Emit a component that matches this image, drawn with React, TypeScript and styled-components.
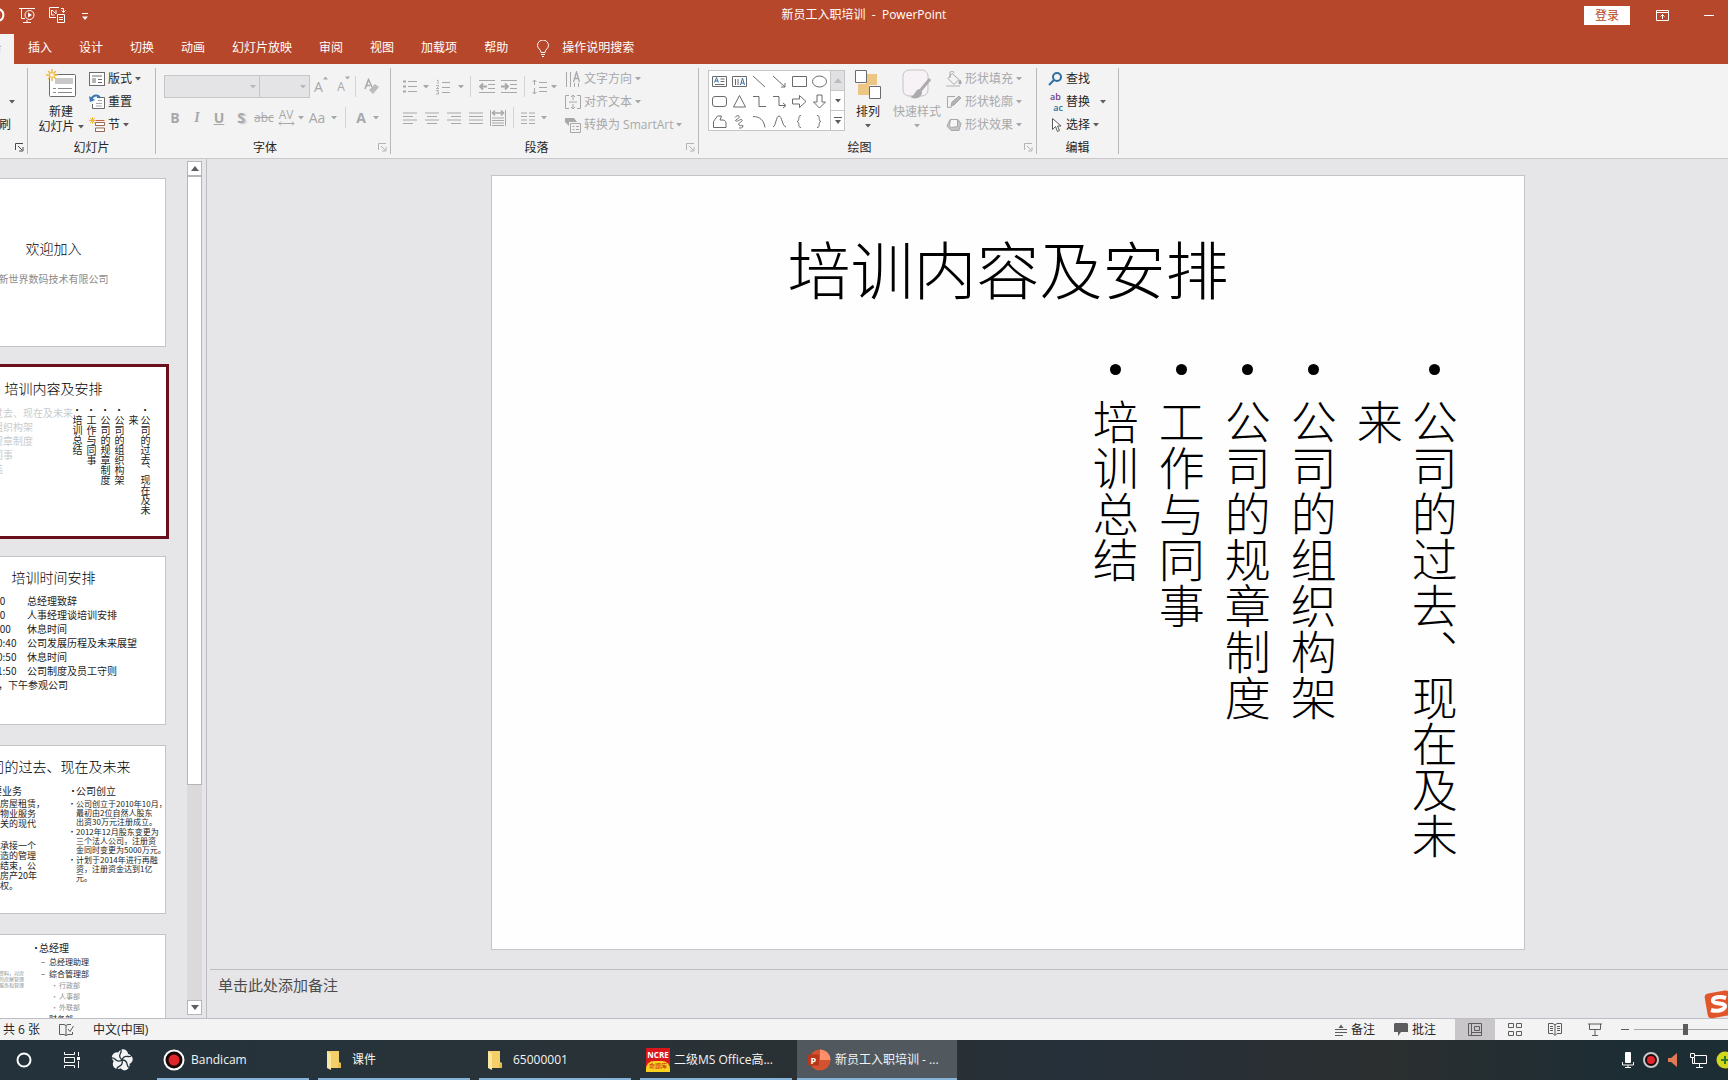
import React from 'react';
import styled, { createGlobalStyle, css } from 'styled-components';

const GlobalStyle = createGlobalStyle`
  *, *::before, *::after { box-sizing: border-box; }
  html, body, #root { height: 100%; margin: 0; }
  body {
    overflow: hidden;
    font-family: "Open Sans", "Noto Sans CJK SC", sans-serif;
    font-size: 12px;
    line-height: 16px;
    color: #262626;
  }
  button, input, select, textarea { font: inherit; color: inherit; margin: 0; }
  button { border: 0; padding: 0; background: none; white-space: nowrap; }
  ul { list-style: none; margin: 0; padding: 0; }
  h1, h2, p { margin: 0; font-weight: inherit; }
  svg { display: block; flex: none; }
`;

const GREY = '#a8a8aa';
const DARK = '#5c5c5e';

/* ---------- shell ---------- */

const Window = styled.div`
  display: flex;
  flex-direction: column;
  height: 100vh;
  overflow: hidden;
  background: #e6e6e8;
`;

const TitleBar = styled.header`
  display: grid;
  grid-template-columns: 1fr auto 1fr;
  align-items: center;
  height: 34px;
  padding-bottom: 4px;
  background: #b7472a;
  color: #fff;
`;

const QuickAccess = styled.div`
  display: flex;
  align-items: center;
  gap: 13px;
  margin-left: -10px;
`;

const DocTitle = styled.div`
  white-space: pre;
`;

const WindowTools = styled.div`
  display: flex;
  align-items: center;
  justify-content: flex-end;
  padding-right: 14px;
`;

const SignIn = styled.button`
  width: 46px;
  height: 19px;
  margin-right: 26px;
  background: #fff;
  color: #b7472a;
  line-height: 19px;
`;

const IconButton = styled.button<{ $right?: number }>`
  display: flex;
  align-items: center;
  justify-content: center;
  margin-right: ${p => p.$right ?? 0}px;
`;

const TabStrip = styled.nav`
  display: flex;
  height: 30px;
  background: #b7472a;
`;

const Tab = styled.button<{ $active?: boolean }>`
  display: flex;
  align-items: center;
  justify-content: flex-end;
  padding: 0 13px 2px 14px;
  color: #fff;
  ${p => p.$active && css`
    width: 14px;
    padding-left: 0;
    background: #f3f3f3;
    color: #b7472a;
    overflow: hidden;
  `}
`;

const Search = styled.button`
  display: flex;
  align-items: center;
  gap: 13px;
  padding: 0 14px 2px 16px;
  color: #fff;
`;

/* ---------- ribbon ---------- */

const Ribbon = styled.section`
  display: flex;
  height: 95px;
  border-bottom: 1px solid #c9c9cb;
  background: #f3f3f3;
`;

const Group = styled.div<{ $w: number }>`
  display: flex;
  flex-direction: column;
  flex: none;
  width: ${p => p.$w}px;
`;

const GroupLine = styled.div`
  flex: none;
  width: 1px;
  margin: 4px 0 4px;
  background: #b9b9bb;
`;

const GroupBody = styled.div<{ $left?: number; $gap?: number; $top?: number }>`
  display: flex;
  height: 72px;
  padding: ${p => p.$top ?? 3}px 0 0 ${p => p.$left ?? 0}px;
  gap: ${p => p.$gap ?? 0}px;
`;

const GroupFoot = styled.div`
  display: flex;
  align-items: center;
  height: 22px;
  padding-top: 1px;
  white-space: nowrap;
  & > span { flex: 1; text-align: center; }
`;

const Launcher = styled.button<{ $off?: boolean }>`
  display: flex;
  width: 16px;
  height: 16px;
  align-items: center;
  justify-content: center;
  color: ${p => (p.$off ? '#b4b4b6' : '#4a4a4c')};
`;

const Stack = styled.div<{ $w?: number }>`
  display: flex;
  flex-direction: column;
  flex: none;
  ${p => p.$w && `width: ${p.$w}px;`}
`;

const SmallCommand = styled.button<{ $off?: boolean; $far?: boolean }>`
  display: flex;
  align-items: center;
  height: 23px;
  gap: 3px;
  color: ${p => (p.$off ? GREY : '#262626')};
  & > svg:last-child:not(:first-child) { margin-left: ${p => (p.$far ? 7 : 0)}px; }
`;

const BigCommand = styled.button<{ $w: number; $off?: boolean }>`
  display: flex;
  flex-direction: column;
  align-items: center;
  width: ${p => p.$w}px;
  padding-top: 2px;
  line-height: 15px;
  color: ${p => (p.$off ? GREY : '#262626')};
  & > span { display: flex; align-items: center; gap: 3px; }
  & > svg + span { margin-top: 4px; }
  & > svg:last-child { margin-top: 5px; }
`;

const ToolRow = styled.div<{ $top?: number }>`
  display: flex;
  align-items: center;
  height: 31px;
  margin-top: ${p => p.$top ?? 0}px;
  color: ${GREY};
`;

const Tool = styled.button<{ $w: number }>`
  display: flex;
  align-items: center;
  justify-content: center;
  flex: none;
  width: ${p => p.$w}px;
  height: 22px;
  font-size: 14px;
  & b { font-weight: 700; }
`;

const Small = styled.span`
  font-size: 12px;
`;

const Shadow = styled.b`
  text-shadow: 2px 1px 1px #c8c8ca;
`;

const Serif = styled.i`
  font-family: "Liberation Serif", serif;
  font-weight: 700;
`;

const ToolLine = styled.div<{ $l: number; $r: number }>`
  width: 1px;
  height: 21px;
  margin: 0 ${p => p.$r}px 0 ${p => p.$l}px;
  background: #d4d4d6;
`;

const Combo = styled.label<{ $w: number }>`
  display: grid;
  align-items: center;
  width: ${p => p.$w}px;
  height: 23px;
  margin-right: -1px;
  & > * { grid-area: 1 / 1; }
  & > svg { justify-self: end; margin-right: 4px; }
  & > select {
    width: 100%;
    height: 23px;
    appearance: none;
    border: 1px solid #c6c6c8;
    border-radius: 0;
    background: #e4e4e6;
    opacity: 1;
  }
`;

const Gallery = styled.div`
  display: flex;
  width: 137px;
  height: 61px;
  margin-top: 3px;
  border: 1px solid #c6c6c8;
  background: #fff;
`;

const Shapes = styled.div`
  display: grid;
  grid-template-columns: repeat(6, 20px);
  grid-auto-rows: 20px;
  flex: 1;
`;

const GalleryScroll = styled.div`
  display: flex;
  flex-direction: column;
  width: 14px;
  border-left: 1px solid #c6c6c8;
  & > button { flex: 1; display: flex; align-items: center; justify-content: center; }
  & > button + button { border-top: 1px solid #c6c6c8; }
  & > button:first-child { background: #e1e1e3; }
`;

const ShapeButton = styled.button`
  display: flex;
  align-items: center;
  justify-content: center;
`;

const ClipText = styled.button`
  display: flex;
  align-items: center;
  justify-content: flex-end;
  width: 11px;
  height: 23px;
  overflow: hidden;
`;

const Raise = styled.span`
  align-self: flex-start;
  & > svg { width: 5px; height: 4px; }
`;

const Spacing = styled.span`
  display: flex;
  flex-direction: column;
  align-items: center;
  font-size: 12px;
  line-height: 12px;
`;

const ReplaceMark = styled.span`
  display: flex;
  flex-direction: column;
  width: 15px;
  font-size: 9px;
  line-height: 11px;
  font-weight: 600;
  color: #6b3f8c;
  & > span + span { align-self: flex-end; color: #2f6f9f; }
`;

/* ---------- work area ---------- */

const Work = styled.main`
  display: flex;
  flex: 1;
  min-height: 0;
`;

const Panel = styled.aside`
  display: flex;
  flex: none;
  width: 207px;
  padding-right: 4px;
  border-right: 1px solid #bdbdc3;
`;

const ThumbList = styled.div`
  display: flex;
  flex-direction: column;
  gap: 20px;
  width: 187px;
  padding: 19px 0 0;
  overflow: hidden;
`;

const Thumb = styled.article<{ $on?: boolean }>`
  flex: none;
  width: 225px;
  height: 169px;
  margin-left: -59px;
  border: 1px solid ${p => (p.$on ? '#fff' : '#c3c3c8')};
  background: #fff;
  box-shadow: ${p => (p.$on ? '0 0 0 3px #6a0f1c' : 'none')};
  font-family: "Noto Sans CJK SC", sans-serif;
  font-size: 10px;
  line-height: 14px;
  color: #1c1c1c;
  white-space: nowrap;
  overflow: hidden;
`;

const ThumbTitle = styled.h2<{ $top: number }>`
  padding-top: ${p => p.$top}px;
  margin-bottom: 1px;
  font-size: 14px;
  line-height: 20px;
  font-weight: 300;
  color: #000;
  text-align: center;
`;

const ThumbSub = styled.p`
  margin-top: 14px;
  text-align: center;
  color: #8b8b8b;
`;

const ThumbSplit = styled.div`
  display: flex;
  justify-content: space-between;
`;

const Ghost = styled.div`
  padding: 7px 0 0 21px;
  width: 128px;
  color: #cbcbcb;
`;

const MiniVertical = styled.ul`
  display: flex;
  flex-direction: column;
  writing-mode: vertical-rl;
  height: 118px;
  padding-top: 6px;
  margin-right: 14px;
  line-height: 12px;
  font-size: 10px;
  gap: 2px;
  & > li { display: flex; gap: 2px; white-space: normal; }
  & > li > span { width: 12px; height: 8px; text-align: center; }
  & > li > p { height: 102px; }
`;

const Schedule = styled.table`
  margin: 7px 0 0 21px;
  border-collapse: collapse;
  & td { padding: 0; height: 14px; line-height: 14px; }
  & td:first-child { width: 64px; }
`;

const MiniColumn = styled.div<{ $w: number; $top?: number }>`
  width: ${p => p.$w}px;
  padding-top: ${p => p.$top ?? 7}px;
`;

const MiniBullet = styled.p<{ $size?: number; $line?: number; $in?: number; $dim?: boolean; $gap?: number }>`
  display: flex;
  gap: ${p => p.$gap ?? 3}px;
  padding-left: ${p => p.$in ?? 0}px;
  font-size: ${p => p.$size ?? 10}px;
  line-height: ${p => p.$line ?? 14}px;
  color: ${p => (p.$dim ? '#8f8f8f' : 'inherit')};
  margin-bottom: 1px;
  & > span:first-child:not(:last-child) { width: 5px; }
`;

const MiniBlock = styled.p`
  padding-left: 58px;
  font-size: 9px;
  line-height: 10px;
  margin-bottom: 12px;
`;

const TinyNote = styled.p`
  width: 82px;
  margin-top: 35px;
  font-size: 5px;
  line-height: 6px;
  text-align: right;
  color: #8f8f8f;
`;

const Scrollbar = styled.div`
  display: flex;
  flex-direction: column;
  width: 15px;
  margin: 2px 0 3px;
  background: #dcd9db;
`;

const ScrollArrow = styled.button`
  display: flex;
  align-items: center;
  justify-content: center;
  height: 15px;
  border: 1px solid #b4b4ba;
  background: #fff;
`;

const ScrollThumb = styled.div`
  flex: 0 0 71.3%;
  border: 1px solid #b4b4ba;
  background: #fff;
`;

const ScrollSpace = styled.div`
  flex: 1;
`;

const Stage = styled.section`
  display: flex;
  flex-direction: column;
  flex: 1;
  min-width: 0;
`;

const Canvas = styled.div`
  display: flex;
  justify-content: center;
  flex: 1;
  min-height: 0;
  padding: 16px 0 19px 81px;
`;

const Slide = styled.article`
  display: flex;
  flex-direction: column;
  height: 100%;
  aspect-ratio: 4 / 3;
  padding: 55px 62px 84px;
  border: 1px solid #c3c3c8;
  background: #fefefe;
  color: #000;
  font-family: "Noto Sans CJK SC", sans-serif;
  font-weight: 300;
`;

const SlideTitle = styled.h1`
  font-size: 63px;
  line-height: 72px;
  text-align: center;
`;

const Agenda = styled.ul`
  display: flex;
  flex-direction: column;
  gap: 11px;
  flex: 1;
  min-height: 0;
  margin-top: 51px;
  writing-mode: vertical-rl;
  font-size: 46px;
  line-height: 55px;
`;

const AgendaItem = styled.li`
  display: flex;
  gap: 15px;
  & > p { flex: 1; }
`;

const Dot = styled.span`
  display: flex;
  align-items: center;
  justify-content: center;
  width: 55px;
  height: 30px;
  &::before { content: ""; width: 11px; height: 11px; border-radius: 50%; background: #000; }
`;

const Notes = styled.textarea`
  height: 49px;
  margin-left: 3px;
  padding: 5px 8px;
  border: 0;
  border-top: 1px solid #bdbdc3;
  background: transparent;
  font-size: 15px;
  line-height: 20px;
  resize: none;
  outline: 0;
  &::placeholder { color: #4c4c4e; opacity: 1; }
`;

const Sogou = styled.div`
  position: absolute;
  right: -5px;
  bottom: 61px;
`;

/* ---------- status bar ---------- */

const StatusBar = styled.footer`
  display: flex;
  align-items: center;
  justify-content: space-between;
  height: 22px;
  border-top: 1px solid #bdbdc3;
  background: #f3f3f3;
`;

const StatusSide = styled.div<{ $right?: boolean }>`
  display: flex;
  align-items: center;
  height: 100%;
  white-space: nowrap;
  ${p => (p.$right ? 'margin-right: -10px;' : 'padding-left: 3px; gap: 19px;')}
`;

const StatusButton = styled.button`
  display: flex;
  align-items: center;
  gap: 4px;
  margin-right: 19px;
`;

const ViewButton = styled.button<{ $on?: boolean }>`
  display: flex;
  align-items: center;
  justify-content: center;
  width: 40px;
  height: 100%;
  background: ${p => (p.$on ? '#c8c6c8' : 'transparent')};
`;

const Zoom = styled.input`
  appearance: none;
  width: 104px;
  height: 13px;
  background: linear-gradient(#a6a6a8, #a6a6a8) center / 100% 1px no-repeat;
  &::-webkit-slider-thumb { appearance: none; width: 5px; height: 11px; background: #5c5c5e; }
`;

/* ---------- task bar ---------- */

const TaskBar = styled.footer`
  display: flex;
  align-items: stretch;
  height: 40px;
  background: linear-gradient(90deg, #24323c 0%, #283339 28%, #2a3033 50%, #26303a 62%, #2b2f30 80%, #1d2d34 94%);
  color: #f4f4f4;
`;

const TaskIcons = styled.div`
  display: flex;
  align-items: center;
  width: 157px;
  & > button { width: 48px; height: 40px; display: flex; align-items: center; justify-content: center; }
  & > button:last-child { margin-left: 2px; }
`;

const Task = styled.button<{ $active?: boolean; $gap?: number }>`
  display: flex;
  align-items: center;
  flex: none;
  gap: ${p => p.$gap ?? 4}px;
  width: ${p => (p.$active ? 160 : 152)}px;
  margin: 0 ${p => (p.$active ? 0 : 9)}px 0 ${p => (p.$active ? -4 : 0)}px;
  padding: 2px 0 0 ${p => (p.$active ? 10 : 6)}px;
  border-bottom: 2px solid #86b4d9;
  background: ${p => (p.$active ? '#51595f' : 'transparent')};
`;

const FolderSlot = styled.span`
  display: flex;
  justify-content: flex-end;
  width: 18px;
`;

const NcreLogo = styled.span`
  display: flex;
  flex-direction: column;
  width: 24px;
  height: 24px;
  background: #d8161c;
  color: #fff;
  font-size: 8px;
  line-height: 13px;
  text-align: center;
  & > span { height: 11px; line-height: 11px; font-size: 6px; border-radius: 8px 8px 0 0; background: #f8d21c; color: #c8161c; }
`;

const Tray = styled.div`
  display: flex;
  align-items: center;
  gap: 9px;
  margin: 0 -6px 0 auto;
`;

/* ---------- drawings ---------- */

const Caret = ({ c = GREY }: { c?: string }) => (
  <svg width="6" height="4" viewBox="0 0 6 4"><path d="M0 0h6L3 3.6z" fill={c} /></svg>
);
const CaretUp = ({ c = GREY }: { c?: string }) => (
  <svg width="8" height="5" viewBox="0 0 8 5"><path d="M0 5h8L4 0z" fill={c} /></svg>
);
const CaretDown = ({ c = GREY }: { c?: string }) => (
  <svg width="8" height="5" viewBox="0 0 8 5"><path d="M0 0h8L4 5z" fill={c} /></svg>
);

type LineProps = { w?: number; h?: number; c?: string; sw?: number; children: React.ReactNode };
const Line = ({ w = 16, h = 16, c = GREY, sw = 1, children }: LineProps) => (
  <svg width={w} height={h} viewBox={`0 0 ${w} ${h}`} fill="none" stroke={c} strokeWidth={sw}>{children}</svg>
);

const LauncherIcon = () => (
  <svg width="9" height="9" viewBox="0 0 9 9" fill="none" stroke="currentColor">
    <path d="M.5 7V.5H8M3 3l4 4M8 4v4H4" />
  </svg>
);

const NewSlideIcon = () => (
  <svg width="32" height="31" viewBox="0 0 32 31" fill="none">
    <rect x="4.5" y="5.5" width="26" height="22" rx="1" fill="#fff" stroke="#6b6b6d" />
    <rect x="10" y="9" width="18" height="6" fill="#c9c9cb" />
    <path d="M8 19.500h3M13 19.500h14M8 23.500h3M13 23.500h14" stroke="#8a8a8c" />
    <path d="M7 0v12M1 6h12M3 2l8 8M11 2l-8 8" stroke="#f0b849" strokeWidth="1.5" />
    <circle cx="7" cy="6" r="2.5" fill="#fff6dc" stroke="#f0b849" />
  </svg>
);
const LayoutIcon = () => (
  <Line c="#6b6b6d"><rect x=".5" y="1.5" width="15" height="13" fill="#fff" />
    <rect x="3" y="4" width="10" height="2" fill="#b5b5b7" stroke="none" />
    <rect x="3" y="7" width="4" height="5" fill="#b5b5b7" stroke="none" /><path d="M9 8.500h4M9 11.500h4" /></Line>
);
const ResetIcon = () => (
  <Line c="#6b6b6d"><path d="M8 3.500h7.500v11h-12V10" fill="#fff" />
    <path d="M9 6.500h4M7 9.500h6M7 12h6" stroke="#a8a8aa" />
    <path d="M2 5.500C4 1 9 0 11 4" stroke="#3a78b5" strokeWidth="2" /><path d="M0 2l1 6 5-2z" fill="#3a78b5" stroke="none" /></Line>
);
const SectionIcon = () => (
  <Line c="#6b6b6d"><path d="M6 3.500h9.500M6 14.500h9.500" stroke="#c8643c" /><path d="M6.500 5.500h9v3h-9zM6.500 11h9v3.500h-9z" fill="#fff" stroke="#9a6a54" />
    <path d="M3.500 0v7M0 3.500h7M1 1l5 5M6 1L1 6" stroke="#f0b849" /></Line>
);

const Lines = ({ d }: { d: string }) => <Line w={14} h={12}><path d={d} /></Line>;

const BulletIcon = () => (
  <Line w={14} h={15}><path d="M5 2.500h9M5 7.500h9M5 12.500h9" /><path d="M0 2.500h3M0 7.500h3M0 12.500h3" strokeWidth="2" /></Line>
);
const NumberIcon = () => (
  <Line w={14} h={16}><path d="M6 3.500h8M6 8.500h8M6 13.500h8" /><path d="M1 1.500l1-.5v4M0 6.500h2.500v1L.5 9.500H3M0 11.500h2.500l-1 1.500 1 .5v1.500H0" strokeWidth=".9" /></Line>
);
const IndentIcon = ({ out }: { out?: boolean }) => (
  <Line><path d="M0 1.500h16M9 5.500h7M9 9.500h7M0 13.500h16" />
    <path d={out ? 'M8 7.500H1M4 4.500l-3 3 3 3' : 'M0 7.500h7M4 4.500l3 3-3 3'} strokeWidth="1.8" /></Line>
);
const SpacingIcon = () => (
  <Line w={15}><path d="M7 3.500h8M7 8.500h8M7 12.500h8M2.500 1v5M.5 3l2-2 2 2M2.500 9v6M.5 13l2 2 2-2" /></Line>
);
const DistributeIcon = () => (
  <Line><path d="M.5 0v16M15.500 0v16M2 8h12M2 10.500h12M2 13h12M2 15.500h12" /><path d="M2 3h12M5 .5L2.500 3 5 5.500M11 .5L13.500 3 11 5.500" strokeWidth="1.5" /></Line>
);
const ColumnsIcon = () => (
  <Line w={14} h={12}><path d="M0 1h6M8 1h6M0 4.500h6M8 4.500h6M0 8h6M8 8h6M0 11.500h6M8 11.500h6" /></Line>
);
const DirectionIcon = () => (
  <Line><path d="M1.500 1v15M5.500 1v15M9.500 12v4M13.500 12v4" /><path d="M8.500 11l3-10 3 10M9.500 7.500h4" strokeWidth="1.3" /></Line>
);
const AlignTextIcon = () => (
  <Line><path d="M4 1.500H.5v13H4M12 1.500h3.500v13H12M4 8h8M8 1v5M6 3l2-2 2 2M8 10v5M6 13l2 2 2-2" /></Line>
);
const SmartArtIcon = () => (
  <Line><path d="M0 1h9l3 4H4v4L0 5z" fill="#a8a8aa" stroke="none" /><path d="M5.500 6.500h10v9h-10zM7.500 9.500h2M11 9.500h3M7.500 12.500h2M11 12.500h3" fill="#f3f3f3" /></Line>
);
const EraserIcon = () => (
  <Line w={16} h={18}><path d="M1 11L4.500 1.500 8 9M2.500 7.500H6" strokeWidth="1.5" /><path d="M5 12l6-6 4 3-6 7z" fill="#bcbcbe" stroke="none" /></Line>
);

const SHAPES: [string, React.ReactNode][] = [
  ['文本框', <><path d="M.5 2.500h14v10H.5zM8.500 5h4M8.500 7.500h4M3 10.500h9.500" /><path d="M2.500 8.500l2-5 2 5M3 7h3" stroke="#3a6ea8" /></>],
  ['竖排文本框', <><path d="M.5 2.500h14v10H.5zM3.500 5v6M6 5v6" /><path d="M8.500 11l2-7 2 7M9 9h3" stroke="#3a6ea8" /></>],
  ['直线', <path d="M1 2l12 11" />],
  ['箭头', <path d="M1 2l12 11M13 9v4H9" />],
  ['矩形', <path d="M.5 2.500h14v10H.5z" />],
  ['椭圆', <ellipse cx="7.5" cy="7.5" rx="7" ry="5.5" />],
  ['圆角矩形', <rect x=".5" y="2.5" width="14" height="10" rx="2.5" />],
  ['三角形', <path d="M7.500 1.500L13.500 13h-12z" />],
  ['肘形连接符', <path d="M1 2.500h6v10h7" />],
  ['肘形箭头', <path d="M1 2.500h6v9h6M11 9l3 2.500L11 14" />],
  ['右箭头', <path d="M.5 5h7V1.500l6.500 6-6.500 6V10h-7z" />],
  ['下箭头', <path d="M5 1v7H1.500l6 6 6-6H10V1z" />],
  ['任意多边形', <path d="M1.500 13.500v-6l4-5.500h4L8 6h3c3 0 3 3 3 4v3.500z" />],
  ['自由曲线', <path d="M3 3.500c2-3 5-2 4 0S2 6 4 7s5-3 6-1-5 3-3 5 4-1 4 1-2 2-4 2" />],
  ['弧形', <path d="M1 2.500c7 0 11 4 12 11" />],
  ['曲线', <path d="M1 13C4 12 4 2 7 2s3 10 7 11" />],
  ['左大括号', <path d="M9 1.500C5 1.500 8.500 7 5 7.500 8.500 8 5 13.500 9 13.500" />],
  ['右大括号', <path d="M5 1.500C9 1.500 5.500 7 9 7.500 5.500 8 9 13.500 5 13.500" />],
];

const ArrangeIcon = () => (
  <svg width="28" height="31" viewBox="0 0 28 31">
    <path d="M12 5h11v11H12zM4 15h11v11H4z" fill="#edc684" />
    <path d="M1.500 1.500h11v12h-11zM15.500 17.500h11v12h-11z" fill="#fff" stroke="#6b6b6d" />
  </svg>
);
const StyleIcon = () => (
  <svg width="30" height="31" viewBox="0 0 30 31" fill="none">
    <rect x="1" y="1" width="25" height="26" rx="6" fill="#f7f2f6" stroke="#cbbfc9" />
    <path d="M28 10L18 22" stroke="#ababad" strokeWidth="3" /><path d="M17 20c-4 1-4 7-9 8 5 3 12 1 12-5z" fill="#ababad" />
  </svg>
);
const FillIcon = () => (
  <Line><path d="M6 2.500l7 6-5 5-6-6zM4 7V2a2 2 0 014 0" /><path d="M14 9c2 3 1 4 0 4s-2-1 0-4z" fill="#a8a8aa" /><path d="M0 15h14" stroke="#d2d2d4" strokeWidth="2" /></Line>
);
const OutlineIcon = () => (
  <Line><path d="M9 2.500H1.500v11L6 13" /><path d="M5 12l1-4 7-6 2 2-7 7z" fill="#b4b4b6" /></Line>
);
const EffectIcon = () => (
  <Line><path d="M4 2.500h8l3 4-2 7H5L1 9z" fill="#c4c4c6" /><path d="M4.500 2.500h7v7l-6 1-2-2z" fill="#f6f6f6" /></Line>
);
const FindIcon = () => (
  <Line w={15} c="#2f6f9f" sw={2}><circle cx="9" cy="6" r="4" /><path d="M6 9l-5 5" /></Line>
);
const CursorIcon = () => (
  <Line w={15} c="#5c5c5e"><path d="M4.500 1.500v11l3-3 2 5 2-1-2-4.500h3.500z" fill="#fff" /></Line>
);
const Folder = () => (
  <svg width="16" height="20" viewBox="0 0 16 20">
    <path d="M1 1h12v11l2 1v5H1z" fill="#f3cf6a" /><path d="M1 1l4 3v16l-4-2z" fill="#fbe6a0" /><path d="M12 13h3v5h-3z" fill="#e9bd4d" />
  </svg>
);
const PINWHEEL = [0, 72, 144, 216, 288];
const Pinwheel = () => (
  <svg width="22" height="22" viewBox="0 0 22 22">
    {PINWHEEL.map(a => <circle key={a} cx="11" cy="5.3" r="5.1" fill="#f4f4f4" transform={`rotate(${a + 10} 11 11)`} />)}
    {PINWHEEL.map(a => (
      <path key={a} d="M11 11c1-3 3.500-4 6-3.500 2 .4 3 0 4-1.500" fill="none" stroke="#25323b" strokeWidth="1.3" transform={`rotate(${a} 11 11)`} />
    ))}
  </svg>
);

/* ---------- data ---------- */

const TABS = ['插入', '设计', '切换', '动画', '幻灯片放映', '审阅', '视图', '加载项', '帮助'];
const AGENDA = ['公司的过去、现在及未来', '公司的组织构架', '公司的规章制度', '工作与同事', '培训总结'];
const TIMES: [string, string][] = [
  ['8:30-9:00', '总经理致辞'],
  ['9:00-9:50', '人事经理谈培训安排'],
  ['9:50-10:00', '休息时间'],
  ['10:00-10:40', '公司发展历程及未来展望'],
  ['10:40-10:50', '休息时间'],
  ['10:50-11:50', '公司制度及员工守则'],
];

const Foot = ({ text, launcher, off }: { text: string; launcher?: boolean; off?: boolean }) => (
  <GroupFoot>
    <span>{text}</span>
    {launcher && <Launcher $off={off} aria-label={`${text}设置`}><LauncherIcon /></Launcher>}
  </GroupFoot>
);

export default function App() {
  return (
    <Window>
      <GlobalStyle />
      <TitleBar>
        <QuickAccess>
          <IconButton aria-label="恢复"><Line c="#fff" sw={2}><path d="M9 2c7 3 5 12-2 12" /></Line></IconButton>
          <IconButton aria-label="从头开始放映">
            <Line c="#fff" w={17}><path d="M0 1.500h16M2.500 2v9.500H6M4 15.500h8M8 13v2" /><circle cx="10.5" cy="8" r="4.5" /><path d="M9 5.500l4 2.500-4 2.500z" fill="#fff" stroke="none" /></Line>
          </IconButton>
          <IconButton aria-label="版式">
            <Line c="#fff" w={17}><path d="M10 .5H.5v10H7M2.500 3v5h3M3 3l4 4M7 3v4" /><path d="M8.500 7.500h7v8h-7zM10 10.500h4M10 12.500h4M12 1.500h2.500V5M12.500 3.500l2 2 2-2" /></Line>
          </IconButton>
          <IconButton aria-label="自定义快速访问工具栏">
            <Line c="#fff" w={12} h={12}><path d="M3 4.500h6" /><path d="M3 7.500h6L6 11z" fill="#fff" stroke="none" /></Line>
          </IconButton>
        </QuickAccess>
        <DocTitle>新员工入职培训  -  PowerPoint</DocTitle>
        <WindowTools>
          <SignIn>登录</SignIn>
          <IconButton aria-label="功能区显示选项" $right={35}>
            <Line c="#fff" w={13} h={11}><path d="M.5.5h12v10H.5zM.5 2.500h12M6.500 9V4.500M4.500 6.500l2-2 2 2" /></Line>
          </IconButton>
          <IconButton aria-label="最小化"><Line c="#fff" w={10} h={3}><path d="M0 1.500h10" /></Line></IconButton>
        </WindowTools>
      </TitleBar>

      <TabStrip>
        <Tab $active>开始</Tab>
        {TABS.map(t => <Tab key={t}>{t}</Tab>)}
        <Search>
          <Line c="#fff" w={12} h={17}><path d="M4 12.500C4 9.500.5 8.500.5 5.500a5 5 0 0111 0c0 3-3.500 4-3.500 7zM4 14.500h4M5 16.500h2" /></Line>
          操作说明搜索
        </Search>
      </TabStrip>

      <Ribbon>
        <Group $w={27}>
          <GroupBody>
            <Stack $w={15}>
              <SmallCommand as="div" />
              <SmallCommand as={CaretOnly} aria-label="复制选项"><Caret c={DARK} /></SmallCommand>
              <ClipText>格式刷</ClipText>
            </Stack>
          </GroupBody>
          <GroupFoot><span /><Launcher aria-label="剪贴板设置"><LauncherIcon /></Launcher></GroupFoot>
        </Group>
        <GroupLine />

        <Group $w={127}>
          <GroupBody $left={9} $gap={4}>
            <BigCommand $w={48}>
              <NewSlideIcon />
              <span>新建</span>
              <span>幻灯片<Caret c={DARK} /></span>
            </BigCommand>
            <Stack>
              <SmallCommand><LayoutIcon />版式<Caret c={DARK} /></SmallCommand>
              <SmallCommand><ResetIcon />重置</SmallCommand>
              <SmallCommand><SectionIcon />节<Caret c={DARK} /></SmallCommand>
            </Stack>
          </GroupBody>
          <Foot text="幻灯片" />
        </Group>
        <GroupLine />

        <Group $w={234}>
          <GroupBody $left={8} $top={7}>
            <Stack>
              <ToolRow>
                <Combo $w={96}><select disabled aria-label="字体" /><Caret c="#b9b9bb" /></Combo>
                <Combo $w={51}><select disabled aria-label="字号" /><Caret c="#b9b9bb" /></Combo>
                <Tool $w={24} aria-label="增大字号"><span>A</span><Raise><CaretUp /></Raise></Tool>
                <Tool $w={21} aria-label="减小字号"><Small>A</Small><Raise><CaretDown /></Raise></Tool>
                <ToolLine $l={1} $r={5} />
                <Tool $w={22} aria-label="清除格式"><EraserIcon /></Tool>
              </ToolRow>
              <ToolRow>
                <Tool $w={22}><b>B</b></Tool>
                <Tool $w={22}><Serif>I</Serif></Tool>
                <Tool $w={22}><b><u>U</u></b></Tool>
                <Tool $w={22}><Shadow>S</Shadow></Tool>
                <Tool $w={24}><Small><s>abc</s></Small></Tool>
                <Tool $w={20} aria-label="字符间距">
                  <Spacing>AV<Line w={17} h={5}><path d="M1 2.500h15M3 .5l-2 2 2 2M14 .5l2 2-2 2" /></Line></Spacing>
                </Tool>
                <Tool $w={9} aria-label="间距选项"><Caret /></Tool>
                <Tool $w={24}>Aa</Tool>
                <Tool $w={9} aria-label="大小写选项"><Caret /></Tool>
                <ToolLine $l={7} $r={6} />
                <Tool $w={18}><b>A</b></Tool>
                <Tool $w={12} aria-label="颜色选项"><Caret /></Tool>
              </ToolRow>
            </Stack>
          </GroupBody>
          <Foot text="字体" launcher off />
        </Group>
        <GroupLine />

        <Group $w={307}>
          <GroupBody $left={8}>
            <Stack $w={166}>
              <ToolRow $top={4}>
                <Tool $w={22} aria-label="项目符号"><BulletIcon /></Tool>
                <Tool $w={10} aria-label="项目符号选项"><Caret /></Tool>
                <Tool $w={24} aria-label="编号"><NumberIcon /></Tool>
                <Tool $w={11} aria-label="编号选项"><Caret /></Tool>
                <ToolLine $l={4} $r={5} />
                <Tool $w={22} aria-label="降低列表级别"><IndentIcon out /></Tool>
                <Tool $w={22} aria-label="提高列表级别"><IndentIcon /></Tool>
                <ToolLine $l={4} $r={4} />
                <Tool $w={20} aria-label="行距"><SpacingIcon /></Tool>
                <Tool $w={9} aria-label="行距选项"><Caret /></Tool>
              </ToolRow>
              <ToolRow>
                <Tool $w={22} aria-label="左对齐"><Lines d="M0 1h14M0 4.500h10M0 8h14M0 11.500h10" /></Tool>
                <Tool $w={22} aria-label="居中"><Lines d="M0 1h14M2 4.500h10M0 8h14M2 11.500h10" /></Tool>
                <Tool $w={22} aria-label="右对齐"><Lines d="M0 1h14M4 4.500h10M0 8h14M4 11.500h10" /></Tool>
                <Tool $w={22} aria-label="两端对齐"><Lines d="M0 1h14M0 4.500h14M0 8h14M0 11.500h14" /></Tool>
                <Tool $w={22} aria-label="分散对齐"><DistributeIcon /></Tool>
                <ToolLine $l={4} $r={4} />
                <Tool $w={20} aria-label="分栏"><ColumnsIcon /></Tool>
                <Tool $w={11} aria-label="分栏选项"><Caret /></Tool>
              </ToolRow>
            </Stack>
            <Stack>
              <SmallCommand $off><DirectionIcon />文字方向<Caret /></SmallCommand>
              <SmallCommand $off><AlignTextIcon />对齐文本<Caret /></SmallCommand>
              <SmallCommand $off><SmartArtIcon />转换为 SmartArt<Caret /></SmallCommand>
            </Stack>
          </GroupBody>
          <Foot text="段落" launcher off />
        </Group>
        <GroupLine />

        <Group $w={337}>
          <GroupBody $left={9} $gap={3}>
            <Gallery>
              <Shapes>
                {SHAPES.map(([name, art]) => (
                  <ShapeButton key={name} aria-label={name}><Line w={15} h={15} c="#6b6b6d">{art}</Line></ShapeButton>
                ))}
              </Shapes>
              <GalleryScroll>
                <button aria-label="上一行"><CaretUp c="#bcbcbe" /></button>
                <button aria-label="下一行"><Caret c={DARK} /></button>
                <button aria-label="更多形状"><Line w={8} h={8} c={DARK}><path d="M0 .5h8" /><path d="M1 3h6L4 7z" fill={DARK} stroke="none" /></Line></button>
              </GalleryScroll>
            </Gallery>
            <BigCommand $w={40}><ArrangeIcon /><span>排列</span><Caret c={DARK} /></BigCommand>
            <BigCommand $w={52} $off><StyleIcon /><span>快速样式</span><Caret /></BigCommand>
            <Stack>
              <SmallCommand $off><FillIcon />形状填充<Caret /></SmallCommand>
              <SmallCommand $off><OutlineIcon />形状轮廓<Caret /></SmallCommand>
              <SmallCommand $off><EffectIcon />形状效果<Caret /></SmallCommand>
            </Stack>
          </GroupBody>
          <Foot text="绘图" launcher off />
        </Group>
        <GroupLine />

        <Group $w={81}>
          <GroupBody $left={11}>
            <Stack>
              <SmallCommand><FindIcon />查找</SmallCommand>
              <SmallCommand $far><ReplaceMark><span>ab</span><span>ac</span></ReplaceMark>替换<Caret c={DARK} /></SmallCommand>
              <SmallCommand><CursorIcon />选择<Caret c={DARK} /></SmallCommand>
            </Stack>
          </GroupBody>
          <Foot text="编辑" />
        </Group>
        <GroupLine />
      </Ribbon>

      <Work>
        <Panel>
          <ThumbList>
            <Thumb>
              <ThumbTitle $top={59}>欢迎加入</ThumbTitle>
              <ThumbSub>新世界数码技术有限公司</ThumbSub>
            </Thumb>
            <Thumb $on>
              <ThumbTitle $top={10}>培训内容及安排</ThumbTitle>
              <ThumbSplit>
                <Ghost>{AGENDA.map(a => <p key={a}>{a}</p>)}</Ghost>
                <MiniVertical>
                  {AGENDA.map(a => <li key={a}><span>•</span><p>{a}</p></li>)}
                </MiniVertical>
              </ThumbSplit>
            </Thumb>
            <Thumb>
              <ThumbTitle $top={10}>培训时间安排</ThumbTitle>
              <Schedule>
                <tbody>
                  {TIMES.map(([t, what]) => <tr key={t}><td>{t}</td><td>{what}</td></tr>)}
                  <tr><td colSpan={2}>12:00后，下午参观公司</td></tr>
                </tbody>
              </Schedule>
            </Thumb>
            <Thumb>
              <ThumbTitle $top={10}>公司的过去、现在及未来</ThumbTitle>
              <ThumbSplit>
                <MiniColumn $w={100}>
                  <MiniBullet $in={40}>主要业务</MiniBullet>
                  <MiniBlock>房屋租赁，<br />物业服务<br />关的现代</MiniBlock>
                  <MiniBlock>承接一个<br />造的管理<br />结束，公<br />房产20年<br />权。</MiniBlock>
                </MiniColumn>
                <MiniColumn $w={97}>
                  <MiniBullet><span>•</span><span>公司创立</span></MiniBullet>
                  <MiniBullet $size={8} $line={9}><span>•</span><span>公司创立于2010年10月，<br />最初由2位自然人股东<br />出资30万元注册成立。</span></MiniBullet>
                  <MiniBullet $size={8} $line={9}><span>•</span><span>2012年12月股东变更为<br />三个法人公司，注册资<br />金同时变更为5000万元。</span></MiniBullet>
                  <MiniBullet $size={8} $line={9}><span>•</span><span>计划于2014年进行再融<br />资，注册资金达到1亿<br />元。</span></MiniBullet>
                </MiniColumn>
              </ThumbSplit>
            </Thumb>
            <Thumb>
              <ThumbSplit>
                <TinyNote>，资料，对房<br />产的房屋管理<br />的服务和管理</TinyNote>
                <MiniColumn $w={134} $top={6}>
                  <MiniBullet><span>•</span><span>总经理</span></MiniBullet>
                  <MiniBullet $in={10} $size={8} $line={11}><span>–</span><span>总经理助理</span></MiniBullet>
                  <MiniBullet $in={10} $size={8} $line={11}><span>–</span><span>综合管理部</span></MiniBullet>
                  {['行政部', '人事部', '外联部'].map(d => (
                    <MiniBullet key={d} $in={20} $size={7} $line={10} $dim><span>•</span><span>{d}</span></MiniBullet>
                  ))}
                  <MiniBullet $in={10} $size={8} $line={11}><span>–</span><span>财务部</span></MiniBullet>
                </MiniColumn>
              </ThumbSplit>
            </Thumb>
          </ThumbList>
          <Scrollbar>
            <ScrollArrow aria-label="向上滚动"><CaretUp c={DARK} /></ScrollArrow>
            <ScrollThumb />
            <ScrollSpace />
            <ScrollArrow aria-label="向下滚动"><CaretDown c={DARK} /></ScrollArrow>
          </Scrollbar>
        </Panel>

        <Stage>
          <Canvas>
            <Slide>
              <SlideTitle>培训内容及安排</SlideTitle>
              <Agenda>
                {AGENDA.map(a => <AgendaItem key={a}><Dot /><p>{a}</p></AgendaItem>)}
              </Agenda>
            </Slide>
          </Canvas>
          <Notes aria-label="备注" placeholder="单击此处添加备注" />
        </Stage>
      </Work>

      <StatusBar>
        <StatusSide>
          <span>共 6 张</span>
          <IconButton aria-label="拼写检查">
            <Line c={DARK} w={15} h={14}><path d="M7 2.500L5 1.500H.5v10H5l2 1 2-1h4.500V9M7 2.500v10M7 2.500l2-1h3M9 6l2 2.500L14.500 3" /></Line>
          </IconButton>
          <span>中文(中国)</span>
        </StatusSide>
        <StatusSide $right>
          <StatusButton><Line c={DARK} w={12} h={12}><path d="M3.500 4h5L6 .5z" fill={DARK} stroke="none" /><path d="M0 5.500h12M0 8.500h12M0 11.500h8" /></Line>备注</StatusButton>
          <StatusButton><svg width="14" height="13" viewBox="0 0 14 13"><path d="M1 0h12l1 1v8H7l-3 4V9H0V1z" fill="#5c5c5e" /></svg>批注</StatusButton>
          <ViewButton $on aria-label="普通视图"><Line c={DARK} w={14} h={13}><path d="M.5.5h13v12H.5zM3.500.5v12M6.500 3.500h5v4h-5zM3.500 9.500h10" /></Line></ViewButton>
          <ViewButton aria-label="幻灯片浏览"><Line c={DARK} w={14} h={13}><path d="M.5.5h5v4h-5zM8.500.5h5v4h-5zM.5 8.500h5v4h-5zM8.500 8.500h5v4h-5z" /></Line></ViewButton>
          <ViewButton aria-label="阅读视图"><Line c={DARK} w={14} h={13}><path d="M7 2L5 .5H.5v10H5l2 2 2-2h4.500V.5H9zM7 2v10M2 3.500h3M2 5.500h3M2 7.500h3M9 3.500h3M9 5.500h3M9 7.500h3" /></Line></ViewButton>
          <ViewButton aria-label="幻灯片放映"><Line c={DARK} w={14} h={13}><path d="M0 1h14M1.500 1v5.500h11V1M7 7v5M4 12.500h6" /></Line></ViewButton>
          <IconButton aria-label="缩小" $right={5}><Line c={DARK} w={14} h={3}><path d="M6 1.500h8" /></Line></IconButton>
          <Zoom type="range" aria-label="缩放" defaultValue={49} />
        </StatusSide>
      </StatusBar>

      <TaskBar>
        <TaskIcons>
          <button aria-label="搜索"><Line c="#fff" sw={2}><circle cx="8" cy="8" r="6.5" /></Line></button>
          <button aria-label="任务视图"><Line c="#fff"><path d="M.5 0v2.500h10V0M.5 5.500h10v5H.5zM.5 16v-2.500h10V16M14.500 0v4M14.500 9v7" /><path d="M13 5h3v3h-3z" fill="#fff" stroke="none" /></Line></button>
          <button aria-label="浏览器"><Pinwheel /></button>
        </TaskIcons>
        <Task $gap={6}>
          <svg width="22" height="22" viewBox="0 0 22 22"><circle cx="11" cy="11" r="9.5" fill="#180808" stroke="#fff" strokeWidth="2" /><circle cx="11" cy="11" r="5.5" fill="#e0262c" /></svg>
          Bandicam
        </Task>
        <Task $gap={10}><FolderSlot><Folder /></FolderSlot>课件</Task>
        <Task $gap={10}><FolderSlot><Folder /></FolderSlot>65000001</Task>
        <Task>
          <NcreLogo><b>NCRE</b><span>命题库</span></NcreLogo>
          二级MS Office高...
        </Task>
        <Task $active>
          <svg width="24" height="22" viewBox="0 0 24 22">
            <circle cx="13" cy="11" r="10.5" fill="#d35230" /><path d="M13 .5A10.500 10.500 0 0123.500 11H13z" fill="#ff8f6b" />
            <rect x="1" y="5.5" width="11" height="11" rx="1" fill="#b7371d" />
            <text x="3.5" y="14.5" fontSize="9" fontWeight="700" fill="#fff" fontFamily="Open Sans, sans-serif">P</text>
          </svg>
          新员工入职培训 - ...
        </Task>
        <Tray>
          <svg width="12" height="16" viewBox="0 0 12 16"><rect x="3" y="0" width="6" height="11" rx="1" fill="#fff" /><path d="M.5 10v3h11v-3M6 13v2.500M3 15.500h6" stroke="#fff" fill="none" /></svg>
          <svg width="16" height="16" viewBox="0 0 16 16"><circle cx="8" cy="8" r="7" fill="#200808" stroke="#c8c8ca" strokeWidth="2" /><circle cx="8" cy="8" r="4" fill="#e0262c" /></svg>
          <svg width="13" height="14" viewBox="0 0 13 14"><path d="M0 5h3l6-5v14L3 9H0z" fill="#e07a55" /></svg>
          <Line c="#fff" w={17} h={15}><path d="M4 2.500h12.500v8H4.500V5M.5.5h4v4h-4zM2.500 4v6.500h2M9.500 11v3M6 14.500h7" /></Line>
          <svg width="18" height="18" viewBox="0 0 18 18"><circle cx="9" cy="9" r="8.5" fill="#d4d81c" /><path d="M9 5v8M5 9h8" stroke="#2f7a2a" strokeWidth="2" /></svg>
        </Tray>
      </TaskBar>

      <Sogou>
        <svg width="30" height="30" viewBox="0 0 30 30">
          <rect x="3" y="3" width="25" height="25" rx="4" fill="#e2552b" transform="rotate(-10 15 15)" />
          <path d="M23 9C17 7 9 8 10 12s12 1 12 5-8 6-14 4" fill="none" stroke="#fff" strokeWidth="4" />
        </svg>
      </Sogou>
    </Window>
  );
}

const CaretOnly = styled.button`
  justify-content: flex-end;
`;
